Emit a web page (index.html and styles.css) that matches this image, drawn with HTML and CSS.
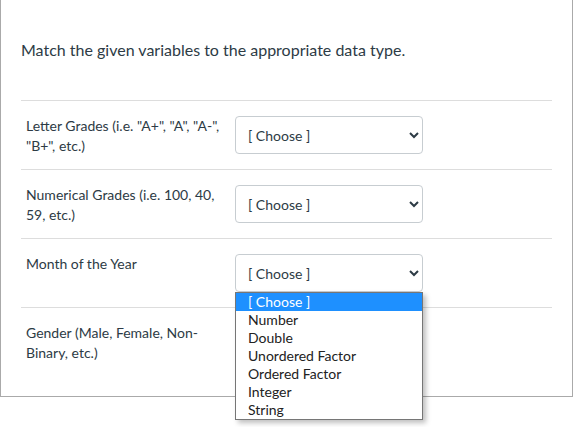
FILE: index.html
```html
<html>
  <head>
    <title>Matching question</title>
    <link rel="stylesheet" href="styles.css">
  </head>
  <body>
    <div class="question">
      <div class="questionText">Match the given variables to the appropriate data type.</div>
      <div class="answers">
        <div class="answer">
          <label class="answerLeft">Letter Grades (i.e. "A+", "A", "A-", "B+", etc.)</label>
          <div class="answerRight">
            <select class="choose">
              <option>[ Choose ]</option>
              <option>Number</option>
              <option>Double</option>
              <option>Unordered Factor</option>
              <option>Ordered Factor</option>
              <option>Integer</option>
              <option>String</option>
            </select>
          </div>
        </div>
        <div class="answer">
          <label class="answerLeft">Numerical Grades (i.e. 100, 40, 59, etc.)</label>
          <div class="answerRight">
            <select class="choose">
              <option>[ Choose ]</option>
              <option>Number</option>
              <option>Double</option>
              <option>Unordered Factor</option>
              <option>Ordered Factor</option>
              <option>Integer</option>
              <option>String</option>
            </select>
          </div>
        </div>
        <div class="answer">
          <label class="answerLeft">Month of the Year</label>
          <div class="answerRight">
            <select class="choose">
              <option>[ Choose ]</option>
              <option>Number</option>
              <option>Double</option>
              <option>Unordered Factor</option>
              <option>Ordered Factor</option>
              <option>Integer</option>
              <option>String</option>
            </select>
            <!-- the open option list of this select -->
            <ul class="optionList">
              <li class="optionItem optionSelected">[ Choose ]</li>
              <li class="optionItem">Number</li>
              <li class="optionItem">Double</li>
              <li class="optionItem">Unordered Factor</li>
              <li class="optionItem">Ordered Factor</li>
              <li class="optionItem">Integer</li>
              <li class="optionItem">String</li>
            </ul>
          </div>
        </div>
        <div class="answer">
          <label class="answerLeft">Gender (Male, Female, Non-Binary, etc.)</label>
          <div class="answerRight">
            <select class="choose">
              <option>[ Choose ]</option>
              <option>Number</option>
              <option>Double</option>
              <option>Unordered Factor</option>
              <option>Ordered Factor</option>
              <option>Integer</option>
              <option>String</option>
            </select>
          </div>
        </div>
      </div>
    </div>
  </body>
</html>
```

FILE: styles.css
```css
body {
  margin: 0;
  font-family: Lato, "Open Sans", sans-serif;
  color: #2d3b45;
  background: white;
}
.question {
  border: 1px solid #aaa;
  border-top: none;
  padding-bottom: 20px;
}
.questionText {
  font-size: 16px;
  line-height: 24px;
  padding: 38px 20px 0 20px;
  margin-bottom: 38px;
}
.answers {margin: 0 20px;}
.answer {
  display: flex;
  align-items: flex-start;
  gap: 9px;
  height: 38px;
  border-top: 1px solid #ddd;
  padding: 15px 0;
}
.answerLeft {
  flex: 0 0 200px;
  margin-left: 5px;
  font-size: 14px;
  line-height: 20px;
}
.answerRight {position: relative;}
.choose {
  width: 188px;
  height: 38px;
  padding: 0 6px 0 8px;
  font-family: Lato, "Open Sans", sans-serif;
  font-size: 14px;
  color: #2d3b45;
  background: white;
  border: 1px solid #c7cdd1;
  border-radius: 4px;
  display: block;
}
.optionList {
  position: absolute;
  top: 100%;
  left: 0;
  width: 188px;
  box-sizing: border-box;
  margin: 0;
  padding: 0;
  list-style: none;
  background: white;
  border: 1px solid #767676;
  box-shadow: 3px 3px 5px rgba(0, 0, 0, 0.25);
  z-index: 2;
}
.optionItem {
  font-size: 14px;
  line-height: 18px;
  padding-left: 12px;
  color: #222;
}
.optionSelected {background-color: #1e90ff; color: white;}
```
